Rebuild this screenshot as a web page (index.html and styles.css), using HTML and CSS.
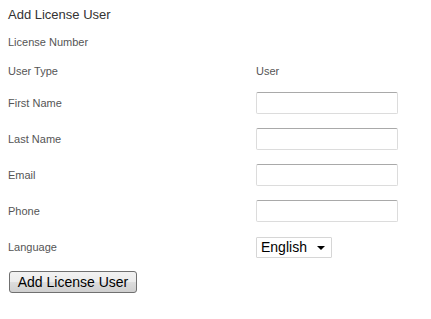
FILE: index.html
```html
<!DOCTYPE html>
<html>
<head>
<meta charset="utf-8">
<link rel="stylesheet" href="styles.css">
</head>
<body>
<div class="page">
  <div class="title">Add License User</div>
  <div class="form">
    <div class="row short"><div class="label">License Number</div><div class="value"></div></div>
    <div class="row short second"><div class="label">User Type</div><div class="value">User</div></div>
    <div class="row"><div class="label">First Name</div><div class="value"><input class="field" type="text"></div></div>
    <div class="row"><div class="label">Last Name</div><div class="value"><input class="field" type="text"></div></div>
    <div class="row"><div class="label">Email</div><div class="value"><input class="field" type="text"></div></div>
    <div class="row"><div class="label">Phone</div><div class="value"><input class="field" type="text"></div></div>
    <div class="row"><div class="label">Language</div><div class="value"><div class="select"><span>English</span><span class="arrow"></span></div></div></div>
  </div>
  <button class="btn" type="button">Add License User</button>
</div>
</body>
</html>
```
FILE: styles.css
```css
html, body {
  margin: 0;
  padding: 0;
  background: #ffffff;
}
.page {
  padding-left: 8px;
  padding-top: 1px;
  font-family: "Liberation Sans", Arial, sans-serif;
}
.title {
  font-size: 13px;
  line-height: 27px;
  height: 27px;
  color: #333333;
}
.form {
  display: flex;
  flex-direction: column;
}
.row {
  display: grid;
  grid-template-columns: 248px 1fr;
  align-items: center;
  height: 36px;
}
.row.short {
  height: 28px;
}
.row.short.second {
  height: 29px;
}
.label, .value {
  font-size: 11px;
  color: #555555;
}
.field {
  box-sizing: border-box;
  width: 142px;
  height: 22px;
  margin: 0;
  padding: 0 3px;
  border: 1px solid #dcdcdc;
  border-top-color: #a9a9a9;
  border-radius: 2px;
  background: #fff;
  display: block;
}
.select {
  box-sizing: border-box;
  width: 76px;
  height: 21px;
  border: 1px solid #d6d6d6;
  border-radius: 1px;
  display: flex;
  align-items: center;
  justify-content: space-between;
  padding: 0 4px 0 4px;
  font-size: 14px;
  color: #000;
  background: #fff;
}
.arrow {
  width: 0;
  height: 0;
  border-left: 4px solid transparent;
  border-right: 4px solid transparent;
  border-top: 4px solid #000;
  margin-right: 2px;
  margin-top: 1px;
}
.btn {
  margin-top: 6px;
  margin-left: 1px;
  box-sizing: border-box;
  width: 128px;
  height: 22px;
  padding: 0;
  font-family: "Liberation Sans", Arial, sans-serif;
  font-size: 14px;
  color: #000;
  border: 1px solid #707070;
  border-radius: 3px;
  background: linear-gradient(#f2f2f2 0%, #ebebeb 50%, #dddddd 51%, #cfcfcf 100%);
  display: block;
}
```
